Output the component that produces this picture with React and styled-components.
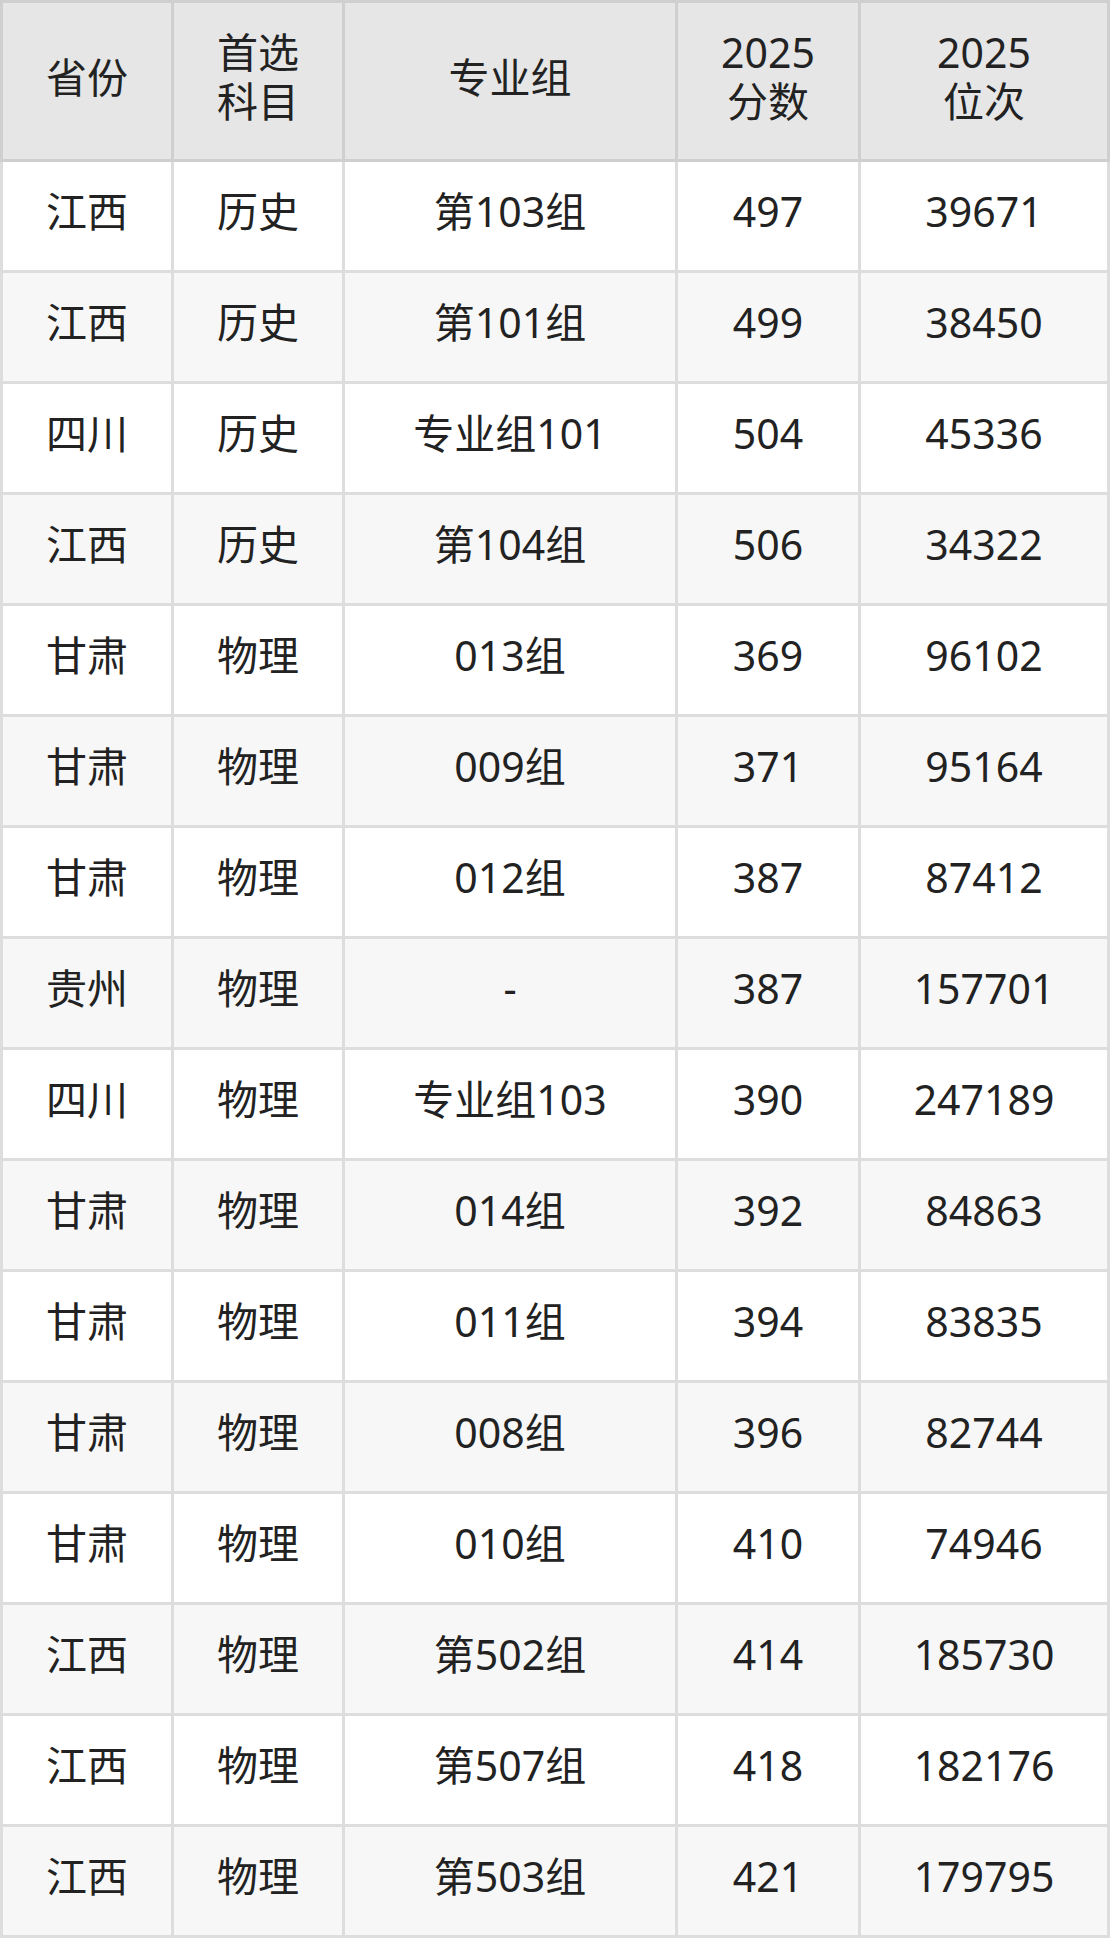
import styled, { createGlobalStyle } from "styled-components";

const GlobalStyle = createGlobalStyle`
  html, body {
    margin: 0;
    padding: 0;
    background: #ffffff;
  }
  body {
    font-family: "Noto Sans", "Noto Sans CJK SC", sans-serif;
    color: #222222;
  }
`;

const COLUMNS = "171px 171px 333px 183px 246px";

const Table = styled.div`
  width: 1110px;
  display: flex;
  flex-direction: column;
`;

const HeaderRow = styled.div`
  display: grid;
  grid-template-columns: ${COLUMNS};
  background: #e6e6e6;
  border: 3px solid #cfcfcf;
`;

const HeaderCell = styled.div`
  box-sizing: border-box;
  height: 156px;
  padding-bottom: 8px;
  display: flex;
  align-items: center;
  justify-content: center;
  text-align: center;
  font-size: 41px;
  line-height: 49px;
  border-right: ${(p) => (p.$last ? "none" : "3px solid #cfcfcf")};
`;

const Row = styled.div`
  display: grid;
  grid-template-columns: ${COLUMNS};
  background: ${(p) => (p.$striped ? "#f7f7f7" : "#ffffff")};
  border: 3px solid #dddddd;
  border-top: none;
`;

const Cell = styled.div`
  box-sizing: border-box;
  height: 108px;
  padding-bottom: 11px;
  display: flex;
  align-items: center;
  justify-content: center;
  font-size: 41px;
  line-height: 50px;
  white-space: nowrap;
  border-right: ${(p) => (p.$last ? "none" : "3px solid #dddddd")};
`;

const headers = [
  ["省份"],
  ["首选", "科目"],
  ["专业组"],
  ["2025", "分数"],
  ["2025", "位次"],
];

const rows = [
  ["江西", "历史", "第103组", "497", "39671"],
  ["江西", "历史", "第101组", "499", "38450"],
  ["四川", "历史", "专业组101", "504", "45336"],
  ["江西", "历史", "第104组", "506", "34322"],
  ["甘肃", "物理", "013组", "369", "96102"],
  ["甘肃", "物理", "009组", "371", "95164"],
  ["甘肃", "物理", "012组", "387", "87412"],
  ["贵州", "物理", "-", "387", "157701"],
  ["四川", "物理", "专业组103", "390", "247189"],
  ["甘肃", "物理", "014组", "392", "84863"],
  ["甘肃", "物理", "011组", "394", "83835"],
  ["甘肃", "物理", "008组", "396", "82744"],
  ["甘肃", "物理", "010组", "410", "74946"],
  ["江西", "物理", "第502组", "414", "185730"],
  ["江西", "物理", "第507组", "418", "182176"],
  ["江西", "物理", "第503组", "421", "179795"],
];

const App = () => {
  return (
    <>
      <GlobalStyle />
      <Table>
        <HeaderRow>
          {headers.map((lines, i) => (
            <HeaderCell key={i} $last={i === headers.length - 1}>
              <div>
                {lines.map((line, j) => (
                  <div key={j}>{line}</div>
                ))}
              </div>
            </HeaderCell>
          ))}
        </HeaderRow>
        {rows.map((row, r) => (
          <Row key={r} $striped={r % 2 === 1}>
            {row.map((value, c) => (
              <Cell key={c} $last={c === row.length - 1}>
                {value}
              </Cell>
            ))}
          </Row>
        ))}
      </Table>
    </>
  );
};

export default App;
